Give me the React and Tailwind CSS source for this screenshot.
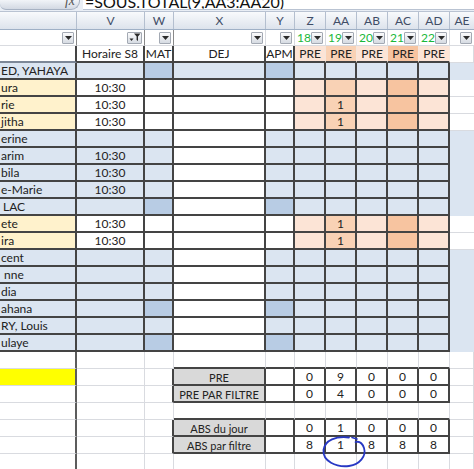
import React from "react";

const GRID = "grid grid-cols-[77px_68px_29px_92px_29px_31px_31px_31px_31px_31px_24px]";

const BLUE = "bg-[#dbe5f1]";
const BLUE_DK = "bg-[#b8cce4]";
const CREAM = "bg-[#fff2cc]";
const PEACH = ["bg-[#fce4d6]", "bg-[#f9d2b5]", "bg-[#fce4d6]", "bg-[#f7c4a0]", "bg-[#fce4d6]"];

const DARK = "border-r-2 border-b-2 border-[#444]";
const LIGHT = "border-r border-b border-[#d9dbe0]";

const rows = [
  { name: "ED, YAHAYA", kind: "head" },
  { name: "ura", kind: "y", time: "10:30" },
  { name: "rie", kind: "y", time: "10:30", aa: "1" },
  { name: "jitha", kind: "y", time: "10:30", aa: "1" },
  { name: "erine", kind: "b" },
  { name: "arim", kind: "b", time: "10:30" },
  { name: "bila", kind: "b", time: "10:30" },
  { name: "e-Marie", kind: "b", time: "10:30" },
  { name: "LAC", kind: "b", dark: true, pad: "pl-[3px]" },
  { name: "ete", kind: "y", time: "10:30", aa: "1" },
  { name: "ira", kind: "y", time: "10:30", aa: "1" },
  { name: "cent", kind: "b" },
  { name: "nne", kind: "b", pad: "pl-[4px]" },
  { name: "dia", kind: "b" },
  { name: "ahana", kind: "b", dark: true },
  { name: "RY, Louis", kind: "b" },
  { name: "ulaye", kind: "b", dark: true },
];

const summary = {
  1: { label: "PRE", vals: ["0", "9", "0", "0", "0"] },
  2: { label: "PRE PAR FILTRE", vals: ["0", "4", "0", "0", "0"] },
  4: { label: "ABS du jour", vals: ["0", "1", "0", "0", "0"] },
  5: { label: "ABS par filtre", vals: ["8", "1", "8", "8", "8"] },
};

const Cell = ({ className = "", children }) => (
  <div className={`flex items-center justify-center overflow-hidden whitespace-nowrap pt-[1px] ${className}`}>
    {children}
  </div>
);

const Drop = ({ funnel }) => (
  <span
    className={`${funnel ? "w-[15px]" : "w-[12px]"} h-[12px] border border-[#a3a9b3] rounded-[1px] bg-gradient-to-b from-[#fbfbfc] to-[#d6dbe2] flex items-center justify-center shrink-0`}
  >
    {funnel ? (
      <svg width="12" height="9" viewBox="0 0 12 9">
        <path d="M0.5 5.5h4L2.5 8z" fill="#2b2b2b" />
        <path d="M5 0.5h6.5L9 3.6v4.4L7.6 7V3.6z" fill="#2b2b2b" />
      </svg>
    ) : (
      <svg width="7" height="4" viewBox="0 0 7 4">
        <path d="M0 0h7L3.5 4z" fill="#2b2b2b" />
      </svg>
    )}
  </span>
);

const letters = ["", "V", "W", "X", "Y", "Z", "AA", "AB", "AC", "AD", "AE"];
const dates = { 5: "18", 6: "19", 7: "20", 8: "21", 9: "22" };
const heads = ["", "Horaire S8", "MAT", "DEJ", "APM", "PRE", "PRE", "PRE", "PRE", "PRE", ""];

function DataRow({ r }) {
  const yellow = r.kind === "y";
  const head = r.kind === "head";
  const side = r.dark || head ? BLUE_DK : BLUE;
  return (
    <div className={`${GRID} h-[17px]`}>
      <Cell className={`${yellow ? CREAM : BLUE} ${DARK} justify-start! ${r.pad || "pl-[1px]"} text-[12px]`}>
        {r.name}
      </Cell>
      <Cell className={`${yellow ? "bg-white" : BLUE} ${DARK}`}>{r.time}</Cell>
      <Cell className={`${yellow ? "bg-white" : side} ${DARK}`} />
      <Cell className={`${head ? BLUE : "bg-white"} ${DARK}`} />
      <Cell className={`${yellow ? "bg-white" : side} ${DARK}`} />
      {[0, 1, 2, 3, 4].map((i) => (
        <Cell key={i} className={`${yellow ? PEACH[i] : BLUE} ${DARK}`}>
          {i === 1 ? r.aa : null}
        </Cell>
      ))}
      <Cell className={yellow ? "bg-white border-b border-[#d9dbe0]" : BLUE} />
    </div>
  );
}

function BottomRow({ i }) {
  const t = summary[i];
  const top = !t && summary[i + 1];
  return (
    <div className={`${GRID} h-[17px]`}>
      <Cell className={`border-r-2 border-r-[#5c5c5c] border-b border-b-[#d9dbe0] ${i === 1 ? "bg-[#ffff00]" : "bg-white"}`} />
      <Cell className={LIGHT} />
      <Cell className={t ? "border-r-2 border-r-[#444] border-b border-b-[#d9dbe0]" : LIGHT} />
      {[3, 4, 5, 6, 7, 8, 9].map((c) => {
        if (t) {
          return (
            <Cell key={c} className={`${DARK} ${c === 3 ? "bg-[#d9d9d9] text-[11px]" : "bg-white"}`}>
              {c === 3 ? t.label : c >= 5 ? t.vals[c - 5] : null}
            </Cell>
          );
        }
        if (top) {
          return <Cell key={c} className="border-r border-r-[#d9dbe0] border-b-2 border-b-[#444]" />;
        }
        return <Cell key={c} className={LIGHT} />;
      })}
      <Cell className={LIGHT} />
    </div>
  );
}

export default function App() {
  return (
    <div className="relative w-[474px] h-[469px] overflow-hidden bg-white text-[12px] leading-none text-[#222] font-['Lato','Liberation_Sans',sans-serif]">
      {/* formula bar */}
      <div className="h-[12px] flex bg-[#e9eef5] border-b border-[#b9c3d2]">
        <div className="w-[80px] h-[10px] rounded-br-[9px] rounded-bl-[6px] bg-gradient-to-b from-[#f1f4f8] to-[#d3d9e3] border-b border-r border-[#a7b2c3] flex justify-end pr-[4px] overflow-hidden">
          <span className="italic text-[14px] leading-none -mt-[6px] text-[#555] font-['Liberation_Serif',serif]">fx</span>
        </div>
        <div className="flex-1 h-[10px] ml-[3px] bg-white overflow-hidden border-b border-[#b9c3d2]">
          <span className="block text-[16px] leading-none -mt-[6px] pl-[2px] text-[#111]">
            =SOUS.TOTAL(9,AA3:AA20)
          </span>
        </div>
      </div>

      {/* column letters */}
      <div className={`${GRID} h-[18px] bg-gradient-to-b from-[#f8fafc] to-[#dde3ec] border-b border-[#9fb0c6]`}>
        {letters.map((l, i) => (
          <Cell key={i} className={`text-[12px] text-[#3f4d66] ${i < 10 ? "border-r border-[#b4bfcf]" : ""}`}>
            {l}
          </Cell>
        ))}
      </div>

      {/* filter row */}
      <div className={`${GRID} h-[16px]`}>
        {letters.map((_, i) => (
          <div
            key={i}
            className={`flex items-center justify-end pr-[2px] bg-white border-b border-[#d9dbe0] ${
              i === 0 || i === 1 || i === 2 ? "border-r border-r-[#8a8a8a]" : i < 10 ? "border-r border-r-[#d9dbe0]" : ""
            }`}
          >
            {dates[i] && (
              <span className="flex-1 pl-[2px] text-[12px] text-[#19b83a] overflow-hidden">{dates[i]}</span>
            )}
            <Drop funnel={i === 1} />
          </div>
        ))}
      </div>

      {/* header row */}
      <div className={`${GRID} h-[17px]`}>
        {heads.map((h, i) => {
          let cls = "bg-white " + LIGHT;
          if (i >= 1 && i <= 4) cls = "bg-white " + DARK;
          if (i >= 5 && i <= 9) cls = `${PEACH[i - 5]} border-b-2 border-b-[#444] border-r border-r-[#f4e6dc]`;
          if (i === 0) cls = "bg-white border-r-2 border-r-[#444] border-b-2 border-b-[#7c8797]";
          return (
            <Cell key={i} className={`${cls} text-[12px]`}>
              {h}
            </Cell>
          );
        })}
      </div>

      {rows.map((r, i) => (
        <DataRow key={i} r={r} />
      ))}

      {[0, 1, 2, 3, 4, 5, 6].map((i) => (
        <BottomRow key={i} i={i} />
      ))}

      {/* hand-drawn circle */}
      <svg className="absolute inset-0 pointer-events-none" width="474" height="469" viewBox="0 0 474 469">
        <path
          d="M349 437.5C336 436 325 440 323.5 450C322.5 461 336 467.5 349 466C360 464.5 366.5 456 364 448C362.5 443.5 359.5 441 355.5 442"
          fill="none"
          stroke="#2738c4"
          strokeWidth="1.8"
          strokeLinecap="round"
        />
        <path d="M352 437.5L357 439" fill="none" stroke="#2738c4" strokeWidth="1.6" strokeLinecap="round" />
      </svg>
    </div>
  );
}
